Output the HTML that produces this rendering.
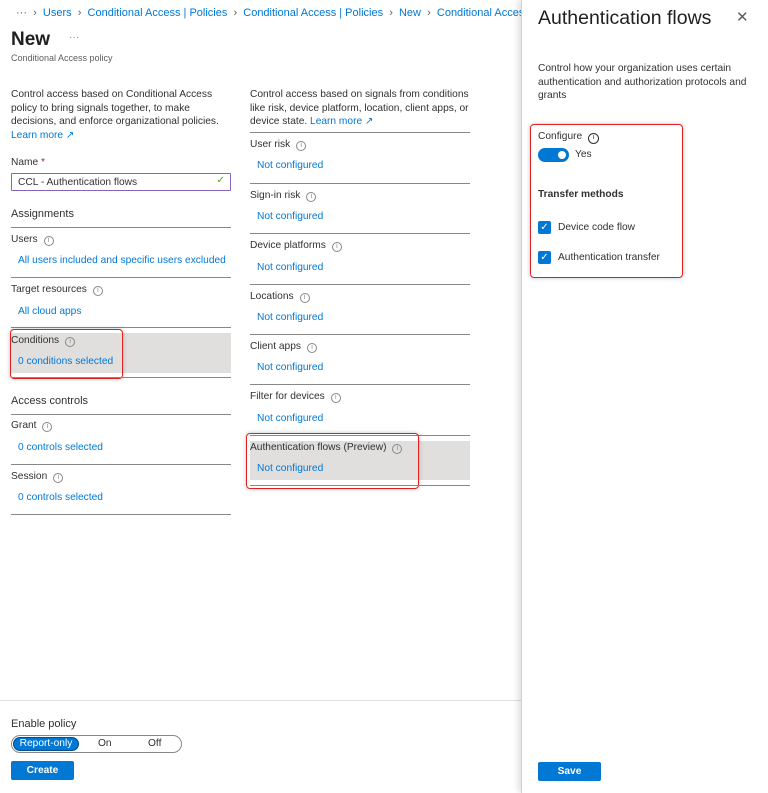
<!DOCTYPE html>
<html><head><meta charset="utf-8"><style>
*{margin:0;padding:0;box-sizing:border-box}
body{width:768px;height:793px;overflow:hidden;background:#fff;font-family:"Liberation Sans",sans-serif;color:#323130;font-size:10.2px;position:relative}
.a{position:absolute;white-space:nowrap}
.l{color:#0078d4}
.hr{position:absolute;height:1px;background:#8a8886}
.i{display:inline-block;width:10px;height:10px;border:1px solid #8a8886;border-radius:50%;font-size:7px;line-height:8px;text-align:center;color:#8a8886;margin-left:6px;vertical-align:0}
.gray{position:absolute;background:#e1dfdd}
.red{position:absolute;border:1.5px solid #e02020;border-radius:4px;box-shadow:0 0 4px rgba(0,0,0,.25)}
.cb{position:absolute;width:13px;height:13px;background:#0078d4;border-radius:2px;color:#fff;font-size:10px;line-height:13px;text-align:center}
</style></head><body>
<div class="a l" style="left:16px;top:7px;font-size:11px;width:505px;overflow:hidden"><span style="color:#605e5c">···</span> &nbsp;<span style="color:#605e5c">›</span>&nbsp; Users &nbsp;<span style="color:#605e5c">›</span>&nbsp; Conditional Access | Policies &nbsp;<span style="color:#605e5c">›</span>&nbsp; Conditional Access | Policies &nbsp;<span style="color:#605e5c">›</span>&nbsp; New &nbsp;<span style="color:#605e5c">›</span>&nbsp; Conditional Access</div>
<div class="a" style="left:11px;top:29px;font-size:19px;font-weight:bold;color:#201f1e">New</div>
<div class="a" style="left:69px;top:32px;color:#8a8886">···</div>
<div class="a" style="left:11px;top:53px;font-size:9px;color:#605e5c">Conditional Access policy</div>
<div class="a" style="left:11px;top:88px;line-height:13.5px;white-space:normal;width:222px">Control access based on Conditional Access policy to bring signals together, to make decisions, and enforce organizational policies. <span class="l">Learn more ↗</span></div>
<div class="a" style="left:11px;top:157px">Name <span style="color:#a4262c">*</span></div>
<div class="a" style="left:11px;top:173px;width:220px;height:18px;border:1px solid #8764b8;border-radius:1px;padding:3px 6px">CCL - Authentication flows<span style="position:absolute;right:5px;top:1px;color:#57a300">✓</span></div>
<div class="a" style="left:11px;top:208px;font-size:11px">Assignments</div>
<div class="hr" style="left:11px;top:227px;width:220px"></div>
<div class="a" style="left:11px;top:234px">Users<span class="i">i</span></div>
<div class="a l" style="left:18px;top:255px">All users included and specific users excluded</div>
<div class="hr" style="left:11px;top:277px;width:220px"></div>
<div class="a" style="left:11px;top:284px">Target resources<span class="i">i</span></div>
<div class="a l" style="left:18px;top:306px">All cloud apps</div>
<div class="hr" style="left:11px;top:327px;width:220px"></div>
<div class="gray" style="left:11px;top:333px;width:220px;height:40px"></div>
<div class="a" style="left:11px;top:335px">Conditions<span class="i">i</span></div>
<div class="a l" style="left:18px;top:356px">0 conditions selected</div>
<div class="red" style="left:10px;top:329px;width:113px;height:50px"></div>
<div class="hr" style="left:11px;top:377px;width:220px"></div>
<div class="a" style="left:11px;top:395px;font-size:11px">Access controls</div>
<div class="hr" style="left:11px;top:414px;width:220px"></div>
<div class="a" style="left:11px;top:420px">Grant<span class="i">i</span></div>
<div class="a l" style="left:18px;top:442px">0 controls selected</div>
<div class="hr" style="left:11px;top:464px;width:220px"></div>
<div class="a" style="left:11px;top:471px">Session<span class="i">i</span></div>
<div class="a l" style="left:18px;top:492px">0 controls selected</div>
<div class="hr" style="left:11px;top:514px;width:220px"></div>

<div class="a" style="left:250px;top:88px;line-height:13.5px;white-space:normal;width:224px">Control access based on signals from conditions like risk, device platform, location, client apps, or device state. <span class="l">Learn more ↗</span></div>
<div class="hr" style="left:250px;top:132px;width:220px"></div>
<div class="a" style="left:250px;top:139px">User risk<span class="i">i</span></div>
<div class="a l" style="left:257px;top:160px">Not configured</div>
<div class="hr" style="left:250px;top:183px;width:220px"></div>
<div class="a" style="left:250px;top:190px">Sign-in risk<span class="i">i</span></div>
<div class="a l" style="left:257px;top:211px">Not configured</div>
<div class="hr" style="left:250px;top:233px;width:220px"></div>
<div class="a" style="left:250px;top:240px">Device platforms<span class="i">i</span></div>
<div class="a l" style="left:257px;top:262px">Not configured</div>
<div class="hr" style="left:250px;top:284px;width:220px"></div>
<div class="a" style="left:250px;top:291px">Locations<span class="i">i</span></div>
<div class="a l" style="left:257px;top:312px">Not configured</div>
<div class="hr" style="left:250px;top:334px;width:220px"></div>
<div class="a" style="left:250px;top:341px">Client apps<span class="i">i</span></div>
<div class="a l" style="left:257px;top:362px">Not configured</div>
<div class="hr" style="left:250px;top:384px;width:220px"></div>
<div class="a" style="left:250px;top:391px">Filter for devices<span class="i">i</span></div>
<div class="a l" style="left:257px;top:413px">Not configured</div>
<div class="hr" style="left:250px;top:435px;width:220px"></div>
<div class="gray" style="left:250px;top:441px;width:220px;height:39px"></div>
<div class="a" style="left:250px;top:442px">Authentication flows (Preview)<span class="i">i</span></div>
<div class="a l" style="left:257px;top:463px">Not configured</div>
<div class="red" style="left:246px;top:433px;width:173px;height:56px"></div>
<div class="hr" style="left:250px;top:485px;width:220px"></div>

<div style="position:absolute;left:0;top:700px;width:521px;height:1px;background:#e1dfdd"></div>
<div class="a" style="left:11px;top:718px;font-size:11px">Enable policy</div>
<div class="a" style="left:11px;top:735px;width:171px;height:18px;border:1px solid #8a8886;border-radius:9px"></div>
<div class="a" style="left:13px;top:737px;width:66px;height:14px;background:#0078d4;border-radius:7px;color:#fff;text-align:center;line-height:12px;border:1px solid #004e8c">Report-only</div>
<div class="a" style="left:98px;top:738px">On</div>
<div class="a" style="left:148px;top:738px">Off</div>
<div class="a" style="left:11px;top:761px;width:63px;height:19px;background:#0078d4;border-radius:2px;color:#fff;text-align:center;line-height:19px;font-weight:bold">Create</div>

<div style="position:absolute;left:521px;top:0;width:247px;height:793px;background:#fff;border-left:1px solid #d2d0ce;box-shadow:-3px 0 6px rgba(0,0,0,.12)"></div>
<div class="a" style="left:538px;top:7px;font-size:19.5px;color:#201f1e">Authentication flows</div>
<div class="a" style="left:736px;top:8px;font-size:15px;color:#605e5c">✕</div>
<div class="a" style="left:538px;top:62px;line-height:13.5px;white-space:normal;width:222px">Control how your organization uses certain authentication and authorization protocols and grants</div>
<div class="red" style="left:530px;top:124px;width:153px;height:154px"></div>
<div class="a" style="left:538px;top:131px">Configure<span class="i" style="width:11px;height:11px;border-color:#323130;color:#323130">i</span></div>
<div class="a" style="left:538px;top:148px;width:31px;height:14px;background:#0078d4;border-radius:7px"><div style="position:absolute;right:3px;top:3px;width:8px;height:8px;border-radius:50%;background:#fff"></div></div>
<div class="a" style="left:575px;top:149px">Yes</div>
<div class="a" style="left:538px;top:189px;font-weight:bold">Transfer methods</div>
<div class="cb" style="left:538px;top:221px">✓</div>
<div class="a" style="left:558px;top:222px">Device code flow</div>
<div class="cb" style="left:538px;top:251px">✓</div>
<div class="a" style="left:558px;top:252px">Authentication transfer</div>
<div class="a" style="left:538px;top:762px;width:63px;height:19px;background:#0078d4;border-radius:2px;color:#fff;text-align:center;line-height:19px;font-weight:bold">Save</div>
</body></html>
